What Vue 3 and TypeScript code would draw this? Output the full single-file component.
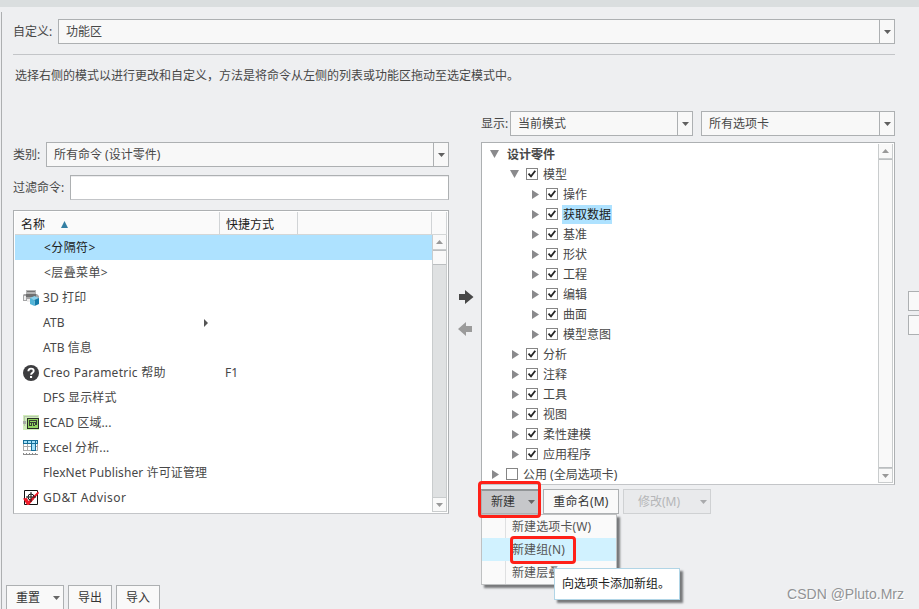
<script setup lang="ts">
interface Command {
  name: string
  icon?: 'print' | 'help' | 'ecad' | 'excel' | 'gdt'
  key?: string
  submenu?: boolean
  selected?: boolean
  wide?: boolean
}

interface TreeNode {
  label: string
  level: number
  open?: boolean
  checked?: boolean
  root?: boolean
  selected?: boolean
}

const commands: Command[] = [
  { name: '<分隔符>', selected: true },
  { name: '<层叠菜单>' },
  { name: '3D 打印', icon: 'print' },
  { name: 'ATB', submenu: true },
  { name: 'ATB 信息' },
  { name: 'Creo Parametric 帮助', icon: 'help', key: 'F1' },
  { name: 'DFS 显示样式' },
  { name: 'ECAD 区域...', icon: 'ecad' },
  { name: 'Excel 分析...', icon: 'excel' },
  { name: 'FlexNet Publisher 许可证管理' },
  { name: 'GD&T Advisor', icon: 'gdt', wide: true },
]

const nodes: TreeNode[] = [
  { label: '设计零件', level: 0, open: true, root: true },
  { label: '模型', level: 1, open: true, checked: true },
  { label: '操作', level: 2, checked: true },
  { label: '获取数据', level: 2, checked: true, selected: true },
  { label: '基准', level: 2, checked: true },
  { label: '形状', level: 2, checked: true },
  { label: '工程', level: 2, checked: true },
  { label: '编辑', level: 2, checked: true },
  { label: '曲面', level: 2, checked: true },
  { label: '模型意图', level: 2, checked: true },
  { label: '分析', level: 1, checked: true },
  { label: '注释', level: 1, checked: true },
  { label: '工具', level: 1, checked: true },
  { label: '视图', level: 1, checked: true },
  { label: '柔性建模', level: 1, checked: true },
  { label: '应用程序', level: 1, checked: true },
  { label: '公用 (全局选项卡)', level: 0 },
]
</script>

<template>
  <div class="page">
    <div class="topbar"></div>
    <div class="dialog">
      <div class="row customize">
        <label>自定义:</label>
        <div class="select"><span>功能区</span><i><svg width="7" height="4"><path d="M0 0h7L3.5 4z" /></svg></i></div>
      </div>
      <div class="divider"></div>
      <p class="hint">选择右侧的模式以进行更改和自定义，方法是将命令从左侧的列表或功能区拖动至选定模式中。</p>

      <div class="columns">
        <section class="left">
          <div class="row category">
            <label>类别:</label>
            <div class="select"><span>所有命令 (设计零件)</span><i><svg width="7" height="4"><path d="M0 0h7L3.5 4z" /></svg></i></div>
          </div>
          <div class="row filter">
            <label>过滤命令:</label>
            <div class="input"></div>
          </div>
          <div class="table">
            <div class="thead">
              <div class="c1">名称<svg width="7" height="7"><path d="M3.5 0L7 7H0z" /></svg></div>
              <div class="c2">快捷方式</div>
              <div class="c3"></div>
              <div class="c4"></div>
            </div>
            <div class="tbody">
              <div class="list">
                <div v-for="c in commands" :key="c.name" class="cmd" :class="{ selected: c.selected, literal: c.name[0] === '<', wide: c.wide, help: c.icon === 'help' }">
                  <span class="ico">
                    <svg v-if="c.icon === 'print'" width="17" height="16" viewBox="0 0 17 16">
                      <path d="M3 0h10v5H3z" fill="#b4b4b4" /><path d="M4 1h8v1H4z" fill="#777" />
                      <path d="M1 4h13l2 2v5H0V5z" fill="#a5a5a6" /><path d="M1 6h2v4H1z" fill="#eee" />
                      <path d="M3 4h10v3H3z" fill="#707070" /><path d="M4 9h7v3H4z" fill="#eee" />
                      <path d="M11.500 6l4.500 2-4.500 2L7 8z" fill="#8bd1ec" />
                      <path d="M11.500 10L16 8v6l-4.500 2z" fill="#147caa" /><path d="M7 8l4.500 2v6L7 14z" fill="#53b5d8" />
                    </svg>
                    <svg v-else-if="c.icon === 'help'" width="16" height="16" viewBox="0 0 16 16">
                      <circle cx="8" cy="8" r="8" fill="#3d3d3f" />
                      <path d="M5.4 6.2C5.4 4.5 6.4 3.6 8 3.6s2.7.9 2.7 2.3c0 1.9-2.6 1.8-2.6 3.9" fill="none" stroke="#fff" stroke-width="1.9" />
                      <path d="M7 11h2.1v2H7z" fill="#fff" />
                    </svg>
                    <svg v-else-if="c.icon === 'ecad'" width="16" height="15" viewBox="0 0 16 15" shape-rendering="crispEdges">
                      <path d="M0 0h16v15H0z" fill="#d1edba" /><path d="M1.500 11V1.500H15" fill="none" stroke="#b6c6ad" />
                      <path d="M0 6h3v3H0z" fill="#a7aaa5" />
                      <path d="M4.500 3.500h11v10h-11z" fill="#91d461" stroke="#292e27" />
                      <path d="M6 5h8v5h-2v1h-2V8H9v3H6z" fill="#384034" /><path d="M7 6h6v1H7zM11 8h1v2h-1zM7 8h1v2H7z" fill="#91d461" />
                    </svg>
                    <svg v-else-if="c.icon === 'excel'" width="15" height="16" viewBox="0 0 15 16" shape-rendering="crispEdges">
                      <path d="M0 0h15v11H0z" fill="#aaa" /><path d="M1 4h3v2H1zM5 4h3v2H5zM1 7h3v3H1zM5 7h3v3H5zM13 4h1v2h-1zM13 7h1v3h-1z" fill="#fff" />
                      <path d="M0 0h15v4H0z" fill="#176f98" /><path d="M1 1h3v2H1zM5 1h3v2H5zM9 1h3v2H9zM13 1h1v2h-1z" fill="#a5e2fa" />
                      <path d="M8 3h5v8H8z" fill="#176f98" /><path d="M9 4h3v6H9z" fill="#a5e2fa" />
                      <path d="M0 14.500h15M.5 13v2M3.500 13v2M6.500 13v2M9.500 13v2M12.500 13v2" fill="none" stroke="#8b8b8b" />
                    </svg>
                    <svg v-else-if="c.icon === 'gdt'" width="16" height="17" viewBox="0 0 16 17">
                      <path d="M1.500 1.500h13v14h-13z" fill="#fff" stroke="#111" />
                      <circle cx="8" cy="8" r="3" fill="none" stroke="#111" />
                      <path d="M0 9.500L4 9l1.500 3L15 2.500 16 4 6 16H4z" fill="#ed1c2a" />
                      <path d="M8 3v10M3 8h10" stroke="#111" />
                    </svg>
                  </span>
                  <span class="name">{{ c.name }}</span>
                  <span class="key">{{ c.key }}<svg v-if="c.submenu" class="sub" width="4" height="8"><path d="M0 0l4 4-4 4z" /></svg></span>
                </div>
              </div>
              <div class="scroll short">
                <b class="btn"><svg width="7" height="4"><path d="M3.5 0L7 4H0z" /></svg></b>
                <b class="thumb"></b>
                <b class="btn end"><svg width="7" height="4"><path d="M0 0h7L3.5 4z" /></svg></b>
              </div>
            </div>
          </div>
        </section>

        <div class="move">
          <svg width="15" height="14"><path d="M0 4h6V0l8.500 7L6 14v-4H0z" fill="#474747" /></svg>
          <svg class="back" width="15" height="14"><path d="M14 4H8V0L0 7l8 7v-4h6z" fill="#9b9b9b" /></svg>
        </div>

        <section class="right">
          <div class="row show">
            <label>显示:</label>
            <div class="select mode"><span>当前模式</span><i><svg width="7" height="4"><path d="M0 0h7L3.5 4z" /></svg></i></div>
            <div class="select tabs"><span>所有选项卡</span><i><svg width="7" height="4"><path d="M0 0h7L3.5 4z" /></svg></i></div>
          </div>
          <div class="tree">
            <div class="nodes">
              <div v-for="n in nodes" :key="n.label" class="node" :class="['l' + n.level, { root: n.root, selected: n.selected }]">
                <span class="twist">
                  <svg v-if="n.open" width="9" height="8"><path d="M0 0h9L4.500 8z" /></svg>
                  <svg v-else class="shut" width="7" height="9"><path d="M0 0l7 4.500L0 9z" /></svg>
                </span>
                <span v-if="!n.root" class="check"><svg v-if="n.checked" width="10" height="10"><path d="M1.500 4.700L4 7.400 8.300 1.800" /></svg></span>
                <span class="text">{{ n.label }}</span>
              </div>
            </div>
            <div class="scroll long">
              <b class="btn"><svg width="7" height="4"><path d="M3.5 0L7 4H0z" /></svg></b>
              <b class="thumb"></b>
              <b class="btn end"><svg width="7" height="4"><path d="M0 0h7L3.5 4z" /></svg></b>
            </div>
          </div>
          <div class="actions">
            <div class="button new">新建<svg width="7" height="4"><path d="M0 0h7L3.5 4z" /></svg>
              <div class="menu">
                <div>新建选项卡(W)</div>
                <div class="hot">新建组(N)<em class="mark"></em></div>
                <div>新建层叠</div>
              </div>
              <div class="tooltip">向选项卡添加新组。</div>
              <em class="mark"></em>
            </div>
            <div class="button rename">重命名(M)</div>
            <div class="button modify">修改(M)<svg width="7" height="4"><path d="M0 0h7L3.5 4z" /></svg></div>
          </div>
        </section>
        <div class="order"><span></span><span></span></div>
      </div>

      <footer>
        <div class="button reset">重置<svg width="7" height="4"><path d="M0 0h7L3.5 4z" /></svg></div>
        <div class="button">导出</div>
        <div class="button">导入</div>
        <div class="watermark">CSDN @Pluto.Mrz</div>
      </footer>
    </div>
  </div>
</template>

<style>
body { overflow: hidden; }
</style>

<style scoped>
* { box-sizing: border-box; }
.page {
  width: 919px; height: 609px; overflow: hidden; background: #eeeff1; color: #474747;
  font: 12px/20px "Noto Sans", "Noto Sans CJK SC", sans-serif;
  display: flex; flex-direction: column; white-space: nowrap;
}
svg { display: block; flex: none; }
.topbar { height: 7px; background: #dadedf; }
.dialog {
  flex: 1; margin: 5px 0 0 1px; border-left: 1px solid #adafb1;
  padding: 7px 0 0 11px; display: flex; flex-direction: column; overflow: hidden;
}
.dialog > *, .columns > * { flex: none; }
.row { display: flex; align-items: center; height: 25px; }
.select { height: 25px; border: 1px solid #adb0b2; background: #f8f8f8; display: flex; align-items: center; flex: 1; }
.select span { flex: 1; padding-left: 7px; }
.select i { width: 15px; height: 23px; border-left: 1px solid #adb0b2; display: flex; align-items: center; justify-content: center; }
.select svg { fill: #606060; }
.customize { width: 882px; }
.customize label { width: 45px; }
.divider { width: 882px; height: 1px; margin-top: 10px; background: #c3c5c8; }
.hint { margin: 11px 0 0 2px; height: 20px; }
.columns { display: flex; margin-top: 25px; height: 403px; }
.left { width: 436px; padding-top: 31px; }
.category label { width: 33px; }
.filter { margin-top: 8px; }
.filter label { width: 57px; }
.input { flex: 1; height: 25px; background: #fff; border: 1px solid #adb0b2; border-bottom-color: #c3c5c8; box-shadow: inset 0 1px #ececee; }
.table { margin-top: 10px; height: 304px; border: 1px solid #adb0b2; border-bottom-color: #c3c5c8; background: #fff; padding: 1px; display: flex; flex-direction: column; }
.thead { display: flex; height: 23px; background: #fafafa; border-bottom: 1px solid #d4d7d7; color: #202020; line-height: 25px; }
.thead > div { border-right: 1px solid #d1d4d6; height: 22px; }
.c1 { width: 205px; padding-left: 6px; display: flex; }
.c1 svg { fill: #347fa3; margin: 9px 0 0 16px; }
.c2 { width: 78px; padding-left: 6px; }
.c3 { flex: 1; }
.c4 { width: 15px; }
.tbody { flex: 1; display: flex; min-height: 0; }
.list { flex: 1; }
.cmd { display: flex; align-items: center; height: 25px; }
.cmd.selected { background: #aee2ff; color: #202020; }
.ico { width: 20px; margin-left: 8px; }
.name { width: 162px; letter-spacing: .1px; }
.literal .name { padding-left: 1px; letter-spacing: .4px; }
.help .name { letter-spacing: .25px; }
.wide .name { letter-spacing: .5px; }
.key { width: 40px; padding-left: 20px; }
.sub { fill: #555; margin-left: -21px; }
.scroll { display: flex; flex-direction: column; width: 15px; background: #dfe1e2; border: solid #c9cccd; border-width: 0 1px; }
.scroll b { display: flex; align-items: center; justify-content: center; background: #f9f9f9; flex: none; height: 15px; border-bottom: 1px solid #c9cccd; }
.scroll .btn svg { fill: #999; }
.scroll .thumb { border-top: 1px solid #bbbec0; border-bottom-color: #bbbec0; }
.scroll .end { margin-top: auto; border-top: 1px solid #c9cccd; }
.move { width: 32px; padding-top: 179px; display: flex; flex-direction: column; align-items: center; gap: 18px; }
.move svg { margin-left: 3px; }
.move .back { margin-left: 1px; }
.right { width: 414px; }
.show label { width: 29px; }
.mode { flex: none; width: 183px; margin-right: 8px; }
.tree { height: 343px; margin-top: 6px; border: 1px solid #adb0b2; border-bottom-color: #c3c5c8; background: #fff; padding: 1px 1px 1px 0; display: flex; }
.nodes { flex: 1; }
.node { display: flex; align-items: center; height: 20px; padding-left: 8px; }
.l1 { padding-left: 28px; }
.l2 { padding-left: 48px; }
.twist { width: 16px; }
.twist svg { fill: #8a8a8c; }
.twist .shut { margin-left: 2px; }
.check { width: 12px; height: 12px; border: 1px solid #858585; background: #fff; margin-right: 4px; }
.check svg { fill: none; stroke: #252525; stroke-width: 1.8; }
.text { padding: 0 1px; line-height: 19px; height: 19px; }
.root .text { font-weight: 700; }
.selected .text { background: #aee2ff; color: #202020; }
.long .thumb { flex: 1; }
.long .end { margin-top: 0; }
.actions { display: flex; margin-top: 4px; }
.button { height: 25px; border: 1px solid #adb0b2; background: #f9f9f9; display: flex; align-items: center; justify-content: center; color: #353535; }
.button svg { fill: #666; }
.new, footer .reset { justify-content: flex-start; padding-left: 9px; gap: 13px; }
.new { position: relative; width: 59px; margin-right: 3px; background: #c6c7ca; border-top: 2px solid #929597; }
.rename { width: 76px; margin-right: 4px; letter-spacing: .2px; }
.modify { width: 88px; background: #e9eaec; border-color: #cfd1d3; color: #b5b6b8; justify-content: flex-start; padding-left: 14px; gap: 20px; }
.modify svg { fill: #a9aaac; }
.mark { position: absolute; border: 3px solid #ff2018; border-radius: 4px; left: -4px; top: -10px; width: 63px; height: 37px; }
.menu { position: absolute; left: -1px; top: 23px; width: 136px; height: 71px; border: 1px solid #bfc1c2; background: linear-gradient(90deg, #fafafa 23px, #dfe0e1 23px, #dfe0e1 24px, #fafafa 24px); box-shadow: 3px 3px 2px #77797b; color: #555; line-height: 23px; }
.menu > div { position: relative; height: 23px; padding-left: 30px; letter-spacing: .1px; }
.menu .hot { background: #d1f2ff; }
.menu .mark { left: 28px; top: -2px; width: 66px; height: 28px; }
.tooltip { position: absolute; left: 72px; top: 77px; width: 126px; height: 32px; padding-left: 7px; line-height: 30px; border: 1px solid #b1d5e6; background: #fff; color: #202020; box-shadow: 3px 3px 2px #77797b; }
.order { margin-left: 13px; padding-top: 180px; display: flex; flex-direction: column; gap: 4px; }
.order span { width: 20px; height: 20px; border: 1px solid #adb0b2; background: #f9f9f9; }
footer { display: flex; gap: 4px; margin: 71px 0 0 -7px; height: 25px; }
footer .button { width: 44px; }
footer .reset { width: 58px; }
.watermark { margin-left: auto; margin-right: 15px; font: 14px/18px "Liberation Sans", sans-serif; color: #929395; text-shadow: 1px 1px #fff; }
</style>
